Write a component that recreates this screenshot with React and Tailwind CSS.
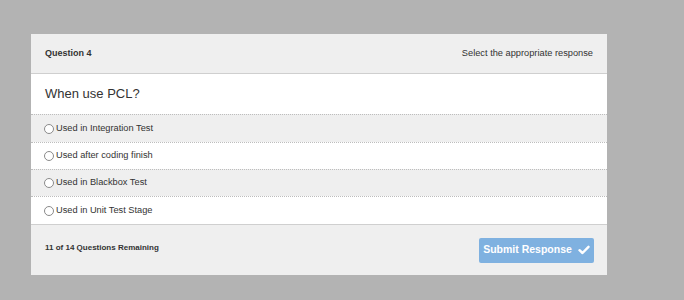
import React from 'react'

const options = [
  { label: 'Used in Integration Test', h: 'h-[28px]', bg: 'bg-[#efefef]' },
  { label: 'Used after coding finish', h: 'h-[27px]', bg: 'bg-white' },
  { label: 'Used in Blackbox Test', h: 'h-[27px]', bg: 'bg-[#efefef]' },
  { label: 'Used in Unit Test Stage', h: 'h-[28px]', bg: 'bg-white' },
]

export default function App() {
  return (
    <div className="w-[684px] h-[300px] bg-[#b3b3b3] pt-[34px] pl-[31px] font-['Liberation_Sans',Arial,sans-serif] text-[#333]">
      <div className="w-[576px] bg-white">
        {/* header */}
        <div className="h-[40px] bg-[#efefef] border-b border-[#cfcfcf] flex items-center justify-between px-[14px]">
          <span className="text-[9px] font-bold">Question 4</span>
          <span className="text-[9.25px]">Select the appropriate response</span>
        </div>

        <div className="h-[40px] flex items-center px-[14px] text-[13px]">When use PCL?</div>

        {options.map((opt, i) => (
          <div
            key={i}
            className={`${opt.h} ${opt.bg} flex items-center gap-[2px] px-[13px] border-t border-dotted border-[#bdbdbd] text-[9.25px]`}
          >
            <span className="w-[10px] h-[10px] rounded-full border border-[#8a8a8a] bg-white shrink-0" />
            <span>{opt.label}</span>
          </div>
        ))}

        {/* footer */}
        <div className="h-[51px] bg-[#efefef] border-t border-[#cfcfcf] flex items-center justify-between pl-[14px] pr-[13px]">
          <span className="text-[8px] font-bold mb-[5px]">11 of 14 Questions Remaining</span>
          <button className="h-[25px] w-[115px] rounded-[2px] bg-[#7fb1e0] text-white text-[10.5px] font-bold flex items-center justify-center gap-[6px]">
            Submit Response
            <svg width="12" height="10" viewBox="0 0 12 10">
              <path d="M1.5 5.2 L4.5 8 L10.5 1.8" fill="none" stroke="white" strokeWidth="2.4" strokeLinecap="round" strokeLinejoin="round" />
            </svg>
          </button>
        </div>
      </div>
    </div>
  )
}
